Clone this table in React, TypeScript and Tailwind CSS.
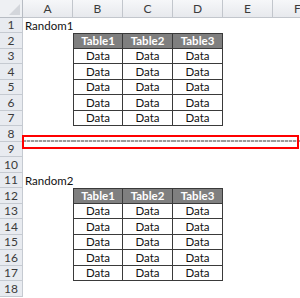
const cols = ["A", "B", "C", "D", "E", "F"];
const rows = Array.from({ length: 18 }, (_, i) => i + 1);

// tables: header row, first data row.. last row, columns B-D (index 1-3)
const tables = [
  { top: 2, bottom: 7 },
  { top: 12, bottom: 17 },
];

function rowHeight(r: number) {
  return r % 2 === 1 ? "h-[15px]" : "h-[16px]";
}

function Cell({ r, c }: { r: number; c: number }) {
  const t = tables.find((t) => r >= t.top && r <= t.bottom);
  const inTable = t && c >= 1 && c <= 3;

  if (inTable && t) {
    const isHead = r === t.top;
    return (
      <div
        className={
          "w-[50px] shrink-0 h-full flex items-center justify-center border-r border-b border-[#3a3a3a] " +
          (c === 1 ? "border-l " : "") +
          (isHead ? "border-t bg-[#7f7f7f] text-white font-bold" : "bg-white text-[#111]")
        }
      >
        {isHead ? "Table" + c : "Data"}
      </div>
    );
  }

  const pageBreak = r === 8;
  let text = "";
  if (c === 0 && r === 1) text = "Random1";
  if (c === 0 && r === 11) text = "Random2";

  return (
    <div className="w-[50px] shrink-0 h-full relative flex flex-col justify-end whitespace-nowrap text-[#111]">
      {text && <span className="absolute left-[2px] top-0 leading-[15px]">{text}</span>}
      {pageBreak && (
        <div className="h-[2px] bg-[repeating-linear-gradient(90deg,#9c9c9c_0_3px,#e2e2e2_3px_4px)]" />
      )}
    </div>
  );
}

export default function App() {
  return (
    <div className="w-[300px] h-[298px] overflow-hidden bg-white relative font-['Lato','Liberation_Sans',sans-serif] text-[11.5px]">
      {/* column headers */}
      <div className="flex h-[18px]">
        <div className="w-[23px] shrink-0 h-full relative bg-[#eef0f3] border-r border-b border-[#b7bcc3]">
          <div className="absolute right-[2px] bottom-[2px] w-0 h-0 border-l-[11px] border-l-transparent border-b-[11px] border-b-[#d3d6db]" />
        </div>
        {cols.map((c) => (
          <div
            key={c}
            className="w-[50px] shrink-0 h-full flex items-center justify-center bg-gradient-to-b from-[#f6f7f9] to-[#e7e9ed] border-r border-b border-[#c2c6cc] text-[#3b3b3b] text-[12px]"
          >
            {c}
          </div>
        ))}
      </div>

      {rows.map((r) => (
        <div key={r} className={"flex " + rowHeight(r)}>
          <div className="w-[23px] shrink-0 h-full flex items-center justify-center bg-[#e8ebf0] border-r border-b border-[#c5cad1] text-[#3b3b3b] text-[12px]">
            {r}
          </div>
          {cols.map((_, c) => (
            <Cell key={c} r={r} c={c} />
          ))}
        </div>
      ))}

      {/* highlight box round the page break */}
      <div className="absolute left-[22px] top-[135px] w-[277px] h-[14px] border-2 border-[#ff0000]" />
    </div>
  );
}
